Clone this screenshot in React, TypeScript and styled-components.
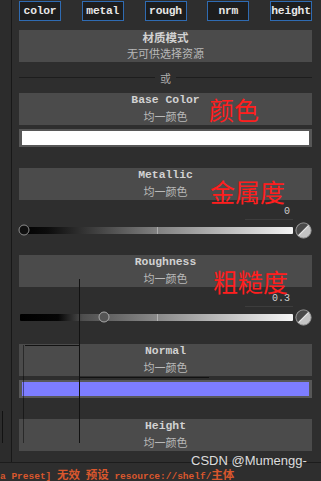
import React from "react";
import styled, { createGlobalStyle } from "styled-components";

const GlobalStyle = createGlobalStyle`
  html, body {
    margin: 0;
    padding: 0;
    background: #2e2e2e;
  }
  body {
    width: 321px;
    height: 481px;
    overflow: hidden;
  }
`;

const MONO = `"Liberation Mono", "Noto Sans CJK SC", monospace`;
const CJK = `"Noto Sans CJK SC", "Noto Sans", sans-serif`;

const Screen = styled.div`
  position: relative;
  width: 321px;
  height: 481px;
  overflow: hidden;
  background: #2e2e2e;
  display: flex;
  flex-direction: column;
  font-family: ${MONO};
`;

const Body = styled.div`
  flex: 1;
  min-height: 0;
  display: flex;
  border-bottom: 1px solid #1c1c1c;
`;

const Gutter = styled.div`
  width: 12px;
  flex-shrink: 0;
  box-sizing: border-box;
  background: #2c2c2c;
  border-right: 1px solid #181818;
`;

const Panel = styled.div`
  flex: 1;
  padding: 1px 9px 0 7px;
  display: flex;
  flex-direction: column;
`;

const TabRow = styled.div`
  display: flex;
  justify-content: space-between;
  height: 20px;
`;

const Tab = styled.div`
  width: 42px;
  box-sizing: border-box;
  border: 1px solid #2f6bb2;
  background: #1d1d1d;
  color: #e8e8e8;
  font-size: 11.3px;
  font-weight: bold;
  line-height: 18px;
  text-align: center;
  letter-spacing: -0.2px;
`;

const HeaderBox = styled.div<{ $mt?: number }>`
  margin-top: ${({ $mt }) => $mt ?? 0}px;
  height: 32px;
  background: #4b4b4b;
  display: flex;
  flex-direction: column;
  align-items: center;
`;

const Title = styled.div<{ $cjk?: boolean }>`
  font-family: ${({ $cjk }) => ($cjk ? CJK : MONO)};
  font-size: ${({ $cjk }) => ($cjk ? "11.5px" : "11.4px")};
  font-weight: bold;
  line-height: 15px;
  color: #d2d2d2;
`;

const Subtitle = styled.div`
  font-family: ${CJK};
  font-size: 11px;
  line-height: 17px;
  color: #b9b9b9;
`;

const Separator = styled.div`
  height: 31px;
  display: flex;
  align-items: center;
  gap: 5px;
  color: #adadad;
  font-family: ${CJK};
  font-size: 11px;

  &::before,
  &::after {
    content: "";
    flex: 1;
    height: 1px;
    background: #1d1d1d;
  }
`;

const Section = styled.div<{ $mt: number }>`
  position: relative;
  margin-top: ${({ $mt }) => $mt}px;
  display: flex;
  flex-direction: column;
`;

const Note = styled.div<{ $left: number; $top: number }>`
  position: absolute;
  left: ${({ $left }) => $left}px;
  top: ${({ $top }) => $top}px;
  font-family: ${CJK};
  font-size: 25px;
  line-height: 16px;
  color: #ff1e1e;
  white-space: nowrap;
`;

const ColorBar = styled.div<{ $color: string }>`
  margin-top: 4px;
  height: 18px;
  box-sizing: border-box;
  padding: 2px 3px;
  background: #575757;

  &::after {
    content: "";
    display: block;
    height: 100%;
    background: ${({ $color }) => $color};
  }
`;

const ValueRow = styled.div`
  height: 20px;
  display: flex;
  justify-content: flex-end;
  padding-right: 19px;
`;

const ValueField = styled.div`
  width: 48px;
  box-sizing: border-box;
  border-bottom: 1px solid #3d3d3d;
  padding: 6px 3px 0 0;
  text-align: right;
  font-size: 10px;
  line-height: 12px;
  color: #cfcfcf;
`;

const SliderRow = styled.div`
  margin-top: 2px;
  height: 16px;
  display: flex;
  align-items: center;
  gap: 2px;
  padding-left: 1px;
`;

const Track = styled.div<{ $variant: "metal" | "rough" }>`
  position: relative;
  flex: 1;
  height: 7px;
  border-radius: 1px;
  background: ${({ $variant }) =>
    $variant === "metal"
      ? "linear-gradient(to right, #000 0%, #0c0c0c 10%, #808080 50%, #f4f4f4 100%)"
      : "linear-gradient(to right, #000 0%, #060606 14%, #2e2e2e 19%, #4e4e4e 23%, #f6f6f6 100%)"};

  &::after {
    content: "";
    position: absolute;
    left: 50%;
    top: 0;
    width: 1px;
    height: 100%;
    background: rgba(255, 255, 255, 0.35);
  }
`;

const Thumb = styled.div<{ $value: number; $hollow?: boolean }>`
  position: absolute;
  top: 50%;
  left: ${({ $value }) => `calc(4px + (100% - 8px) * ${$value})`};
  width: 11px;
  height: 11px;
  box-sizing: border-box;
  border-radius: 50%;
  transform: translate(-50%, -50%);
  border: 1.5px solid ${({ $hollow }) => ($hollow ? "#a9a9a9" : "#8c8c8c")};
  background: ${({ $hollow }) => ($hollow ? "#555" : "#101010")};
  z-index: 1;
`;

const StatusBar = styled.div`
  height: 18px;
  box-sizing: border-box;
  padding-top: 6px;
  line-height: 11px;
  font-size: 9.5px;
  font-weight: bold;
  color: #d9572d;
  white-space: nowrap;
  overflow: hidden;
`;

const Cjk = styled.span`
  font-family: ${CJK};
  font-size: 11.5px;
  font-weight: bold;
`;

const Watermark = styled.div`
  position: absolute;
  left: 191px;
  top: 455px;
  font-family: "Liberation Sans", "Noto Sans", sans-serif;
  font-size: 13px;
  line-height: 11px;
  color: rgba(238, 238, 238, 0.92);
  white-space: nowrap;
`;

const Stroke = styled.div<{ $x: number; $y: number; $w: number; $h: number; $soft?: boolean }>`
  position: absolute;
  left: ${({ $x }) => $x}px;
  top: ${({ $y }) => $y}px;
  width: ${({ $w }) => $w}px;
  height: ${({ $h }) => $h}px;
  background: ${({ $soft }) => ($soft ? "rgba(0, 0, 0, 0.45)" : "#121212")};
  pointer-events: none;
`;

const ResetIcon = () => (
  <svg width="17" height="17" viewBox="0 0 17 17">
    <circle cx="8.5" cy="8.5" r="7.6" fill="#c4c4c4" stroke="#9a9a9a" strokeWidth="1" />
    <path d="M13.6 3.4 A7.2 7.2 0 0 0 3.4 13.6 Z" fill="#4a4a4a" />
    <line x1="13.6" y1="3.4" x2="3.4" y2="13.6" stroke="#e8e8e8" strokeWidth="1.2" />
  </svg>
);

const tabs = ["color", "metal", "rough", "nrm", "height"];

const Header = ({ title, mt }: { title: string; mt?: number }) => (
  <HeaderBox $mt={mt}>
    <Title>{title}</Title>
    <Subtitle>均一颜色</Subtitle>
  </HeaderBox>
);

const Slider = ({ value, hollow, variant }: { value: number; hollow?: boolean; variant: "metal" | "rough" }) => (
  <SliderRow>
    <Track $variant={variant}>
      <Thumb $value={value} $hollow={hollow} />
    </Track>
    <ResetIcon />
  </SliderRow>
);

export default function App() {
  return (
    <>
      <GlobalStyle />
      <Screen>
        <Body>
          <Gutter />
          <Panel>
            <TabRow>
              {tabs.map((t) => (
                <Tab key={t}>{t}</Tab>
              ))}
            </TabRow>

            <HeaderBox $mt={9}>
              <Title $cjk>材质模式</Title>
              <Subtitle>无可供选择资源</Subtitle>
            </HeaderBox>

            <Separator>或</Separator>

            <Section $mt={0}>
              <Header title="Base Color" />
              <ColorBar $color="#ffffff" />
              <Note $left={190} $top={8}>颜色</Note>
            </Section>

            <Section $mt={21}>
              <Header title="Metallic" />
              <ValueRow>
                <ValueField>0</ValueField>
              </ValueRow>
              <Slider value={0} variant="metal" />
              <Note $left={191} $top={15}>金属度</Note>
            </Section>

            <Section $mt={17}>
              <Header title="Roughness" />
              <ValueRow>
                <ValueField>0.3</ValueField>
              </ValueRow>
              <Slider value={0.3} hollow variant="rough" />
              <Note $left={194} $top={18}>粗糙度</Note>
            </Section>

            <Section $mt={19}>
              <Header title="Normal" />
              <ColorBar $color="#7d7dff" />
            </Section>

            <Section $mt={21}>
              <Header title="Height" />
            </Section>
          </Panel>
        </Body>

        <StatusBar>
          a Preset] <Cjk>无效</Cjk> <Cjk>预设</Cjk> resource://shelf/<Cjk>主体</Cjk>
        </StatusBar>

        <Stroke $x={79} $y={279} $w={1} $h={164} />
        <Stroke $x={25} $y={345} $w={54} $h={1} />
        <Stroke $x={79} $y={377} $w={130} $h={1} />
        <Stroke $x={23} $y={345} $w={1} $h={98} $soft />
        <Stroke $x={2} $y={411} $w={1} $h={32} />

        <Watermark>CSDN @Mumengg-</Watermark>
      </Screen>
    </>
  );
}
